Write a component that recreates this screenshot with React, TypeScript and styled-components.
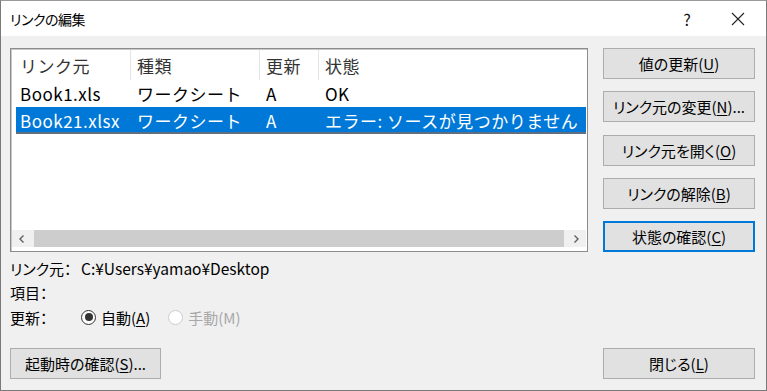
import React from "react";
import styled, { createGlobalStyle } from "styled-components";

const GlobalStyle = createGlobalStyle`
  html, body {
    margin: 0;
    padding: 0;
    background: #ffffff;
  }
  body {
    font-family: "Noto Sans CJK JP", "Noto Sans", sans-serif;
    color: #000000;
  }
`;

const Window = styled.div`
  width: 767px;
  height: 391px;
  box-sizing: border-box;
  border: 1px solid #7a7a7a;
  border-top-color: #9a9a9a;
  display: flex;
  flex-direction: column;
  overflow: hidden;
`;

const TitleBar = styled.div`
  height: 35px;
  background: #ffffff;
  display: flex;
  align-items: center;
  padding-left: 9px;
`;

const Title = styled.div`
  flex: 1;
  font-size: 14px;
  line-height: 20px;
  padding-top: 1px;
  font-feature-settings: "palt";
  letter-spacing: -0.5px;
`;

const TitleButton = styled.div<{ $w: number }>`
  width: ${(p) => p.$w}px;
  height: 35px;
  display: flex;
  align-items: center;
  justify-content: center;
  font-size: 16px;
  color: #111;
`;

const Body = styled.div`
  flex: 1;
  background: #f0f0f0;
  padding: 12px 11px 11px 9px;
  display: flex;
  flex-direction: column;
`;

const TopRow = styled.div`
  display: flex;
  gap: 15px;
  height: 204px;
`;

const ListBox = styled.div`
  width: 578px;
  box-sizing: border-box;
  border: 1px solid #8c8c8c;
  background: #ffffff;
  padding: 1px 1px 4px 1px;
  box-shadow: inset 1px 1px 0 #c8c8c8;
  display: flex;
  flex-direction: column;
  overflow: hidden;
`;

const Rows = styled.div`
  flex: 1;
  overflow: hidden;
  padding-left: 4px;
`;

const Row = styled.div<{ $head?: boolean; $selected?: boolean }>`
  display: grid;
  grid-template-columns: 114px 129px 59px 340px;
  height: ${(p) => (p.$head ? 30 : 27)}px;
  align-items: center;
  font-size: 17px;
  letter-spacing: 0.5px;
  white-space: nowrap;
  color: ${(p) => (p.$head ? "#333" : p.$selected ? "#ffffff" : "#000")};
  background: ${(p) => (p.$selected ? "#0078d7" : "transparent")};
  box-shadow: ${(p) => (p.$selected ? "inset 0 -2px 0 #5f6f80" : "none")};
`;

const Cell = styled.div<{ $first?: boolean; $head?: boolean }>`
  height: 100%;
  display: flex;
  align-items: center;
  padding-left: ${(p) => (p.$first ? 4 : 6)}px;
  border-left: ${(p) => (p.$first ? "none" : p.$head ? "1px solid #e5e5e5" : "1px solid transparent")};
`;

const ScrollBar = styled.div`
  height: 17px;
  display: flex;
  background: #f0f0f0;
`;

const ScrollArrow = styled.div`
  width: 20px;
  display: flex;
  align-items: center;
  justify-content: center;
`;

const ScrollThumb = styled.div`
  flex: 1;
  margin: 0 2px;
  background: #cdcdcd;
`;

const SideButtons = styled.div`
  flex: 1;
  display: flex;
  flex-direction: column;
  justify-content: space-between;
`;

const Button = styled.button<{ $focused?: boolean; $w?: number }>`
  height: 31px;
  width: ${(p) => (p.$w ? `${p.$w}px` : "100%")};
  box-sizing: border-box;
  background: #e1e1e1;
  border: ${(p) => (p.$focused ? "2px solid #0078d7" : "1px solid #adadad")};
  font-family: "Noto Sans CJK JP", "Noto Sans", sans-serif;
  font-size: 15px;
  font-feature-settings: "palt";
  color: #000;
  padding: 0;
  display: flex;
  align-items: center;
  justify-content: center;
  line-height: 1;
  white-space: nowrap;
  u {
    text-decoration-thickness: 1px;
    text-underline-offset: 2px;
  }
`;

const Info = styled.div`
  margin-top: 4px;
  display: flex;
  flex-direction: column;
`;

const InfoRow = styled.div`
  display: flex;
  align-items: center;
  height: 24.5px;
  font-size: 15px;
  white-space: nowrap;
`;

const Label = styled.div`
  width: 71px;
  flex-shrink: 0;
  font-feature-settings: "palt";
`;

const Value = styled.span`
  font-size: 15.5px;
`;

const Radio = styled.span<{ $disabled?: boolean }>`
  display: inline-flex;
  align-items: center;
  margin-right: 18px;
  color: ${(p) => (p.$disabled ? "#a8a8a8" : "#000")};
  u {
    text-underline-offset: 2px;
  }
`;

const RadioDot = styled.span<{ $checked?: boolean; $disabled?: boolean }>`
  width: 15px;
  height: 15px;
  border-radius: 50%;
  box-sizing: border-box;
  border: 1px solid ${(p) => (p.$disabled ? "#cccccc" : "#333333")};
  background: #ffffff;
  margin-right: 5px;
  display: inline-flex;
  align-items: center;
  justify-content: center;
  &::after {
    content: "";
    width: 8px;
    height: 8px;
    border-radius: 50%;
    background: ${(p) => (p.$checked ? "#333333" : "transparent")};
  }
`;

const Footer = styled.div`
  margin-top: auto;
  display: flex;
  justify-content: space-between;
`;

const columns = ["リンク元", "種類", "更新", "状態"];
const links = [
  ["Book1.xls", "ワークシート", "A", "OK"],
  ["Book21.xlsx", "ワークシート", "A", "エラー: ソースが見つかりません"],
];

const Chevron = ({ dir }: { dir: "left" | "right" }) => (
  <svg width="8" height="10" viewBox="0 0 8 10">
    <path
      d={dir === "left" ? "M5.5 1.5 L2 5 L5.5 8.5" : "M2.5 1.5 L6 5 L2.5 8.5"}
      fill="none"
      stroke="#606060"
      strokeWidth="1.4"
    />
  </svg>
);

export default function App() {
  return (
    <>
      <GlobalStyle />
      <Window>
        <TitleBar>
          <Title>リンクの編集</Title>
          <TitleButton $w={46}>?</TitleButton>
          <TitleButton $w={56}>
            <svg width="14" height="14" viewBox="0 0 14 14">
              <path d="M1 1 L13 13 M13 1 L1 13" stroke="#222" strokeWidth="1.1" />
            </svg>
          </TitleButton>
        </TitleBar>
        <Body>
          <TopRow>
            <ListBox>
              <Rows>
                <Row $head>
                  {columns.map((c, i) => (
                    <Cell key={c} $first={i === 0} $head>
                      {c}
                    </Cell>
                  ))}
                </Row>
                {links.map((l, r) => (
                  <Row key={l[0]} $selected={r === 1}>
                    {l.map((v, i) => (
                      <Cell key={i} $first={i === 0}>
                        {v}
                      </Cell>
                    ))}
                  </Row>
                ))}
              </Rows>
              <ScrollBar>
                <ScrollArrow>
                  <Chevron dir="left" />
                </ScrollArrow>
                <ScrollThumb />
                <ScrollArrow>
                  <Chevron dir="right" />
                </ScrollArrow>
              </ScrollBar>
            </ListBox>
            <SideButtons>
              <Button>値の更新(<u>U</u>)</Button>
              <Button>リンク元の変更(<u>N</u>)...</Button>
              <Button>リンク元を開く(<u>O</u>)</Button>
              <Button>リンクの解除(<u>B</u>)</Button>
              <Button $focused>状態の確認(<u>C</u>)</Button>
            </SideButtons>
          </TopRow>
          <Info>
            <InfoRow>
              <Label>リンク元：</Label>
              <Value>C:¥Users¥yamao¥Desktop</Value>
            </InfoRow>
            <InfoRow>
              <Label>項目：</Label>
            </InfoRow>
            <InfoRow>
              <Label>更新：</Label>
              <Radio>
                <RadioDot $checked />
                自動(<u>A</u>)
              </Radio>
              <Radio $disabled>
                <RadioDot $disabled />
                手動(M)
              </Radio>
            </InfoRow>
          </Info>
          <Footer>
            <Button $w={151}>起動時の確認(<u>S</u>)...</Button>
            <Button $w={152}>閉じる(<u>L</u>)</Button>
          </Footer>
        </Body>
      </Window>
    </>
  );
}
